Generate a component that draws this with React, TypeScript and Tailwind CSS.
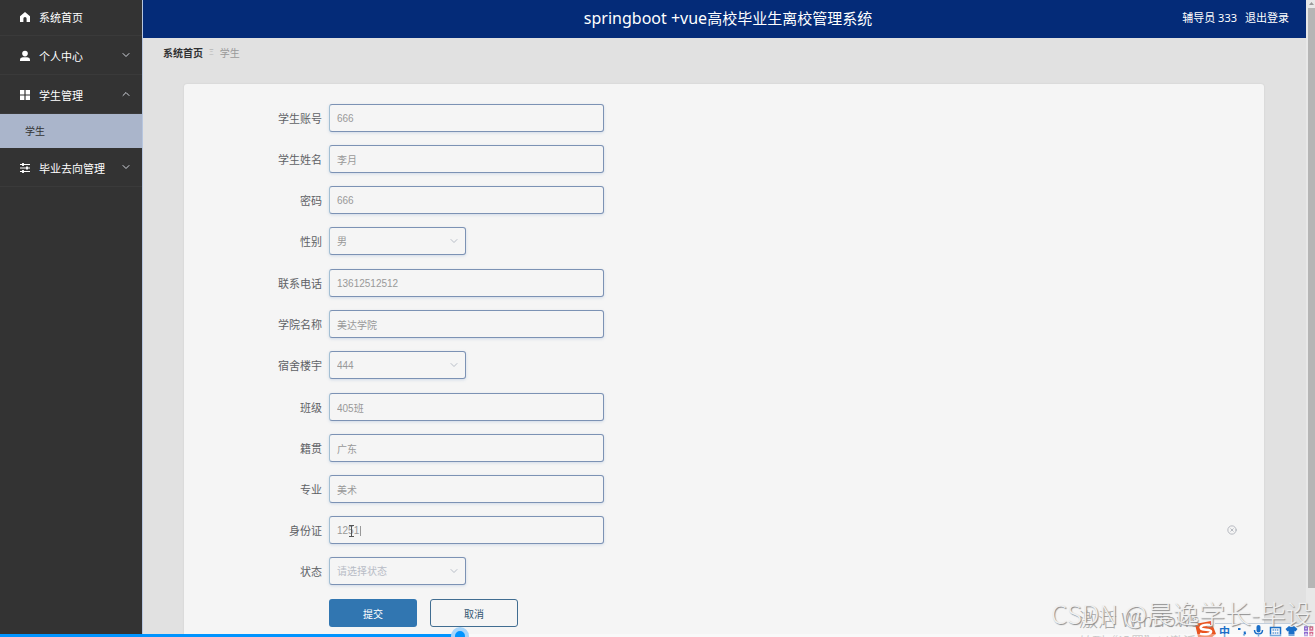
import { ChevronDown, ChevronUp, CircleX } from "lucide-react";
import type { ReactNode } from "react";

type Field = {
    id: string;
    label: string;
    value: string;
    kind: "input" | "select";
    placeholder?: boolean;
    clearable?: boolean;
}

const fields: Field[] = [
    { id: "account", label: "学生账号", value: "666", kind: "input" },
    { id: "name", label: "学生姓名", value: "李月", kind: "input" },
    { id: "password", label: "密码", value: "666", kind: "input" },
    { id: "gender", label: "性别", value: "男", kind: "select" },
    { id: "phone", label: "联系电话", value: "13612512512", kind: "input" },
    { id: "college", label: "学院名称", value: "美达学院", kind: "input" },
    { id: "dorm", label: "宿舍楼宇", value: "444", kind: "select" },
    { id: "class", label: "班级", value: "405班", kind: "input" },
    { id: "origin", label: "籍贯", value: "广东", kind: "input" },
    { id: "major", label: "专业", value: "美术", kind: "input" },
    { id: "idcard", label: "身份证", value: "1251", kind: "input", clearable: true },
    { id: "status", label: "状态", value: "请选择状态", kind: "select", placeholder: true },
];

function HomeIcon() {
    return (
        <svg viewBox="0 0 12 12" className="h-3 w-3" fill="currentColor">
            <path d="M6 1 L11 5.2 V11 H7.6 V7.6 A1.6 1.6 0 0 0 4.4 7.6 V11 H1 V5.2 Z" />
        </svg>
    );
}

function UserIcon() {
    return (
        <svg viewBox="0 0 12 12" className="h-3 w-3" fill="currentColor">
            <circle cx="6" cy="3.6" r="2.8" />
            <path d="M1 11 V9.6 Q1 7.4 3.6 7.2 H8.4 Q11 7.4 11 9.6 V11 Z" />
        </svg>
    );
}

function GridIcon() {
    return (
        <svg viewBox="0 0 12 12" className="h-3 w-3" fill="currentColor">
            <path d="M1 1h4.4v4.4H1zM6.6 1H11v4.4H6.6zM1 6.6h4.4V11H1zM6.6 6.6H11V11H6.6z" />
        </svg>
    );
}

function SlidersIcon() {
    return (
        <svg viewBox="0 0 12 12" className="h-3 w-3" fill="none" stroke="currentColor">
            <path d="M1 2.5h10M1 6h10M1 9.5h10" />
            <path d="M4 1v3M8 4.5v3M4 8v3" strokeWidth="1.8" />
        </svg>
    );
}

function MenuItem({ icon, text, arrow }: { icon: ReactNode; text: string; arrow?: "up" | "down" }) {
    return (
        <a href="#" className="flex h-[39px] items-center border-b border-[#3a3a3a] pt-[2px] pr-[10px] pl-[19px] text-[11px] text-white">
            {icon}
            <span className="ml-2 flex-1">{text}</span>
            {arrow === "down" && <ChevronDown className="mb-[3px] h-3 w-3 text-gray-300" />}
            {arrow === "up" && <ChevronUp className="mb-[3px] h-3 w-3 text-gray-300" />}
        </a>
    );
}

function Sidebar() {
    return (
        <aside className="w-[142px] shrink-0 bg-[#333333]">
            <nav className="-mt-[3px]">
                <MenuItem icon={<HomeIcon />} text="系统首页" />
                <MenuItem icon={<UserIcon />} text="个人中心" arrow="down" />
                <MenuItem icon={<GridIcon />} text="学生管理" arrow="up" />
                <a href="#" className="flex h-[34px] items-center bg-[#aab5cb] pb-[2px] pl-[25px] text-[10px] text-[#333]">学生</a>
                <MenuItem icon={<SlidersIcon />} text="毕业去向管理" arrow="down" />
            </nav>
        </aside>
    );
}

const boxStyle = "block h-7 w-full rounded-[3px] border border-[#7c92b4] border-l-[#a3bfd3] bg-[#f5f5f5] px-[7px] font-[Liberation_Sans,Noto_Sans_CJK_SC,sans-serif] text-[10px] shadow-[0_1px_3px_rgba(100,140,190,0.25)] outline-none";

function FormRow({ field }: { field: Field }) {
    return (
        <div className={field.kind === "select" ? "mb-[14px] flex items-center" : "mb-[13px] flex items-center"}>
            <label htmlFor={field.id} className="w-[138px] shrink-0 pr-[7px] text-right text-[11px] text-[#606266]">
                {field.label}
            </label>
            {field.kind === "input" ? (
                <div className="relative w-[275px]">
                    <input id={field.id} defaultValue={field.value} className={`${boxStyle} text-[#999999]`} />
                    {field.clearable && (
                        <svg viewBox="0 0 16 14" className="absolute top-2 left-[17px] h-[14px] w-4" fill="none">
                            <path d="M3 1.5h5M5.5 1.5v11M3 12.5h5" stroke="#555" />
                            <path d="M14.5 2v10" stroke="#999" />
                        </svg>
                    )}
                </div>
            ) : (
                <div className="relative w-[137px]">
                    <select id={field.id} className={`${boxStyle} appearance-none ${field.placeholder ? "text-[#b8bcc6]" : "text-[#999999]"}`}>
                        <option>{field.value}</option>
                    </select>
                    <ChevronDown className="pointer-events-none absolute top-2 right-[6px] h-3 w-3 text-[#b8bec8]" strokeWidth={2} />
                </div>
            )}
            {field.clearable && (
                <button type="button" aria-label="清除" className="ml-auto">
                    <CircleX className="h-[10px] w-[10px] text-[#a9adb6]" />
                </button>
            )}
        </div>
    );
}

function InputMethodBar() {
    return (
        <div className="absolute right-0 bottom-0 h-[17px] w-[120px]">
            <svg viewBox="0 0 120 17" className="h-full w-full" fill="none">
                <path d="M20 4h100v13H20z" fill="#f8f8f8" />
                <path d="M20 3.5h100" stroke="#c3cedb" />
                <path d="M0 4 L16 1 L21 14 L17 17 H3 Z" fill="#e9541f" />
                <path d="M15 5 C10 4 4 6 6 8.500 C8 10.500 17 9 16 12 C15 14.500 8 15 5 13.500" stroke="#fff" strokeWidth="2.500" />
                <g stroke="#1b6fc8" strokeWidth="1.500">
                    <path d="M43 9h2.500M49.500 11.500l.5 2-1.500 2" strokeWidth="2" />
                    <path d="M59.500 10q0 4 4 4t4-4M63.500 14v2.500" />
                    <rect x="75.500" y="7.500" width="10" height="8" />
                    <path d="M77.500 10h6M77.500 13h6" strokeWidth="1.200" strokeDasharray="1.500 .7" />
                </g>
                <rect x="61.500" y="5" width="4" height="7.500" rx="2" fill="#1b6fc8" />
                <path d="M94 6q2.500 2 5 0l3.500 3-2 2.500-1-.8V16h-6v-5.300l-1 .8-2-2.500z" fill="#1b6fc8" />
                <path d="M109.700 7h2.600v3h-2.600zM109.700 12.500h2.600v3h-2.600z" stroke="#8d6bd0" strokeWidth="1.400" />
                <path d="M115 7h2.600v3H115zM115 12.500h2.600v3H115z" stroke="#d46a8e" strokeWidth="1.400" />
            </svg>
            <span className="absolute bottom-0 left-6 text-[11px] leading-3 font-bold text-[#1b6fc8]">中</span>
        </div>
    );
}

function Watermarks() {
    return (
        <div className="pointer-events-none absolute right-0 bottom-0 h-10 w-[264px] overflow-hidden whitespace-nowrap">
            <div className="absolute top-[10px] left-7 text-[19px] leading-6 font-light text-[#a6a6a6]">激活 Windows</div>
            <div className="absolute top-[34px] left-7 text-[13px] leading-5 text-[#a6a6a6]">转到“设置”以激活 Windows</div>
            <InputMethodBar />
            <div className="absolute top-0 left-0 text-[26px] leading-8 font-light text-[#f0f0f0] [text-shadow:1px_1px_1px_#888]">
                CSDN @晨逸学长-毕设
            </div>
        </div>
    );
}

export default function App() {
    return (
        <div className="relative flex h-screen overflow-hidden bg-[#e1e1e1] font-[Noto_Sans_CJK_SC,sans-serif]">
            <Sidebar />
            <div className="flex min-w-0 flex-1 flex-col border-l border-[#b7c6df]">
                <header className="flex h-[38px] shrink-0 items-center bg-[#042b78] pr-[17px] pb-[2px] pl-6 font-[Noto_Sans,Noto_Sans_CJK_SC,sans-serif] text-white">
                    <div className="flex-1" />
                    <h1 className="text-[15px] leading-6">
                        <span className="text-base">springboot +vue</span>高校毕业生离校管理系统
                    </h1>
                    <div className="flex flex-1 justify-end gap-2 text-[11px]">
                        <span>辅导员 333</span>
                        <a href="#">退出登录</a>
                    </div>
                </header>
                <div className="flex h-7 shrink-0 items-center gap-[6px] pl-5 text-[10px]">
                    <a href="#" className="font-bold text-[#303133]">系统首页</a>
                    <span className="text-[8px] text-[#b5b5b5]">Ξ</span>
                    <span className="text-[#999]">学生</span>
                </div>
                <main className="mt-[18px] mr-[42px] ml-[41px] shrink-0 rounded-[3px] bg-[#f5f5f5] pt-5 pr-[27px] pb-10 pl-[7px] shadow-[0_0_2px_rgba(0,0,0,0.1)]">
                    <form>
                        {fields.map((field) => <FormRow key={field.id} field={field} />)}
                        <div className="flex gap-[13px] pl-[138px] text-[10px]">
                            <button type="button" className="h-7 w-[88px] rounded-[3px] bg-[#3176b1] text-white">提交</button>
                            <button type="button" className="h-7 w-[88px] rounded-[3px] border border-[#416d91] text-[#335572]">取消</button>
                        </div>
                    </form>
                </main>
            </div>
            <div className="flex w-[9px] shrink-0 flex-col bg-[#e8e8e8] pl-[2px]">
                <svg viewBox="0 0 7 8" className="h-2 w-[7px]"><path d="M1 5 L3.500 2 L6 5 Z" fill="#999" /></svg>
                <div className="h-[91%] bg-[#b5b5b5]" />
            </div>
            <Watermarks />
            <div className="absolute inset-x-0 bottom-0 h-[3px] bg-white/40">
                <div className="relative h-full w-[35%] bg-[#0094ff]">
                    <div className="absolute -top-[7px] -right-[9px] h-[18px] w-[18px] rounded-full border-4 border-[#a6d5fb] bg-[#0094ff]" />
                </div>
            </div>
        </div>
    );
}
